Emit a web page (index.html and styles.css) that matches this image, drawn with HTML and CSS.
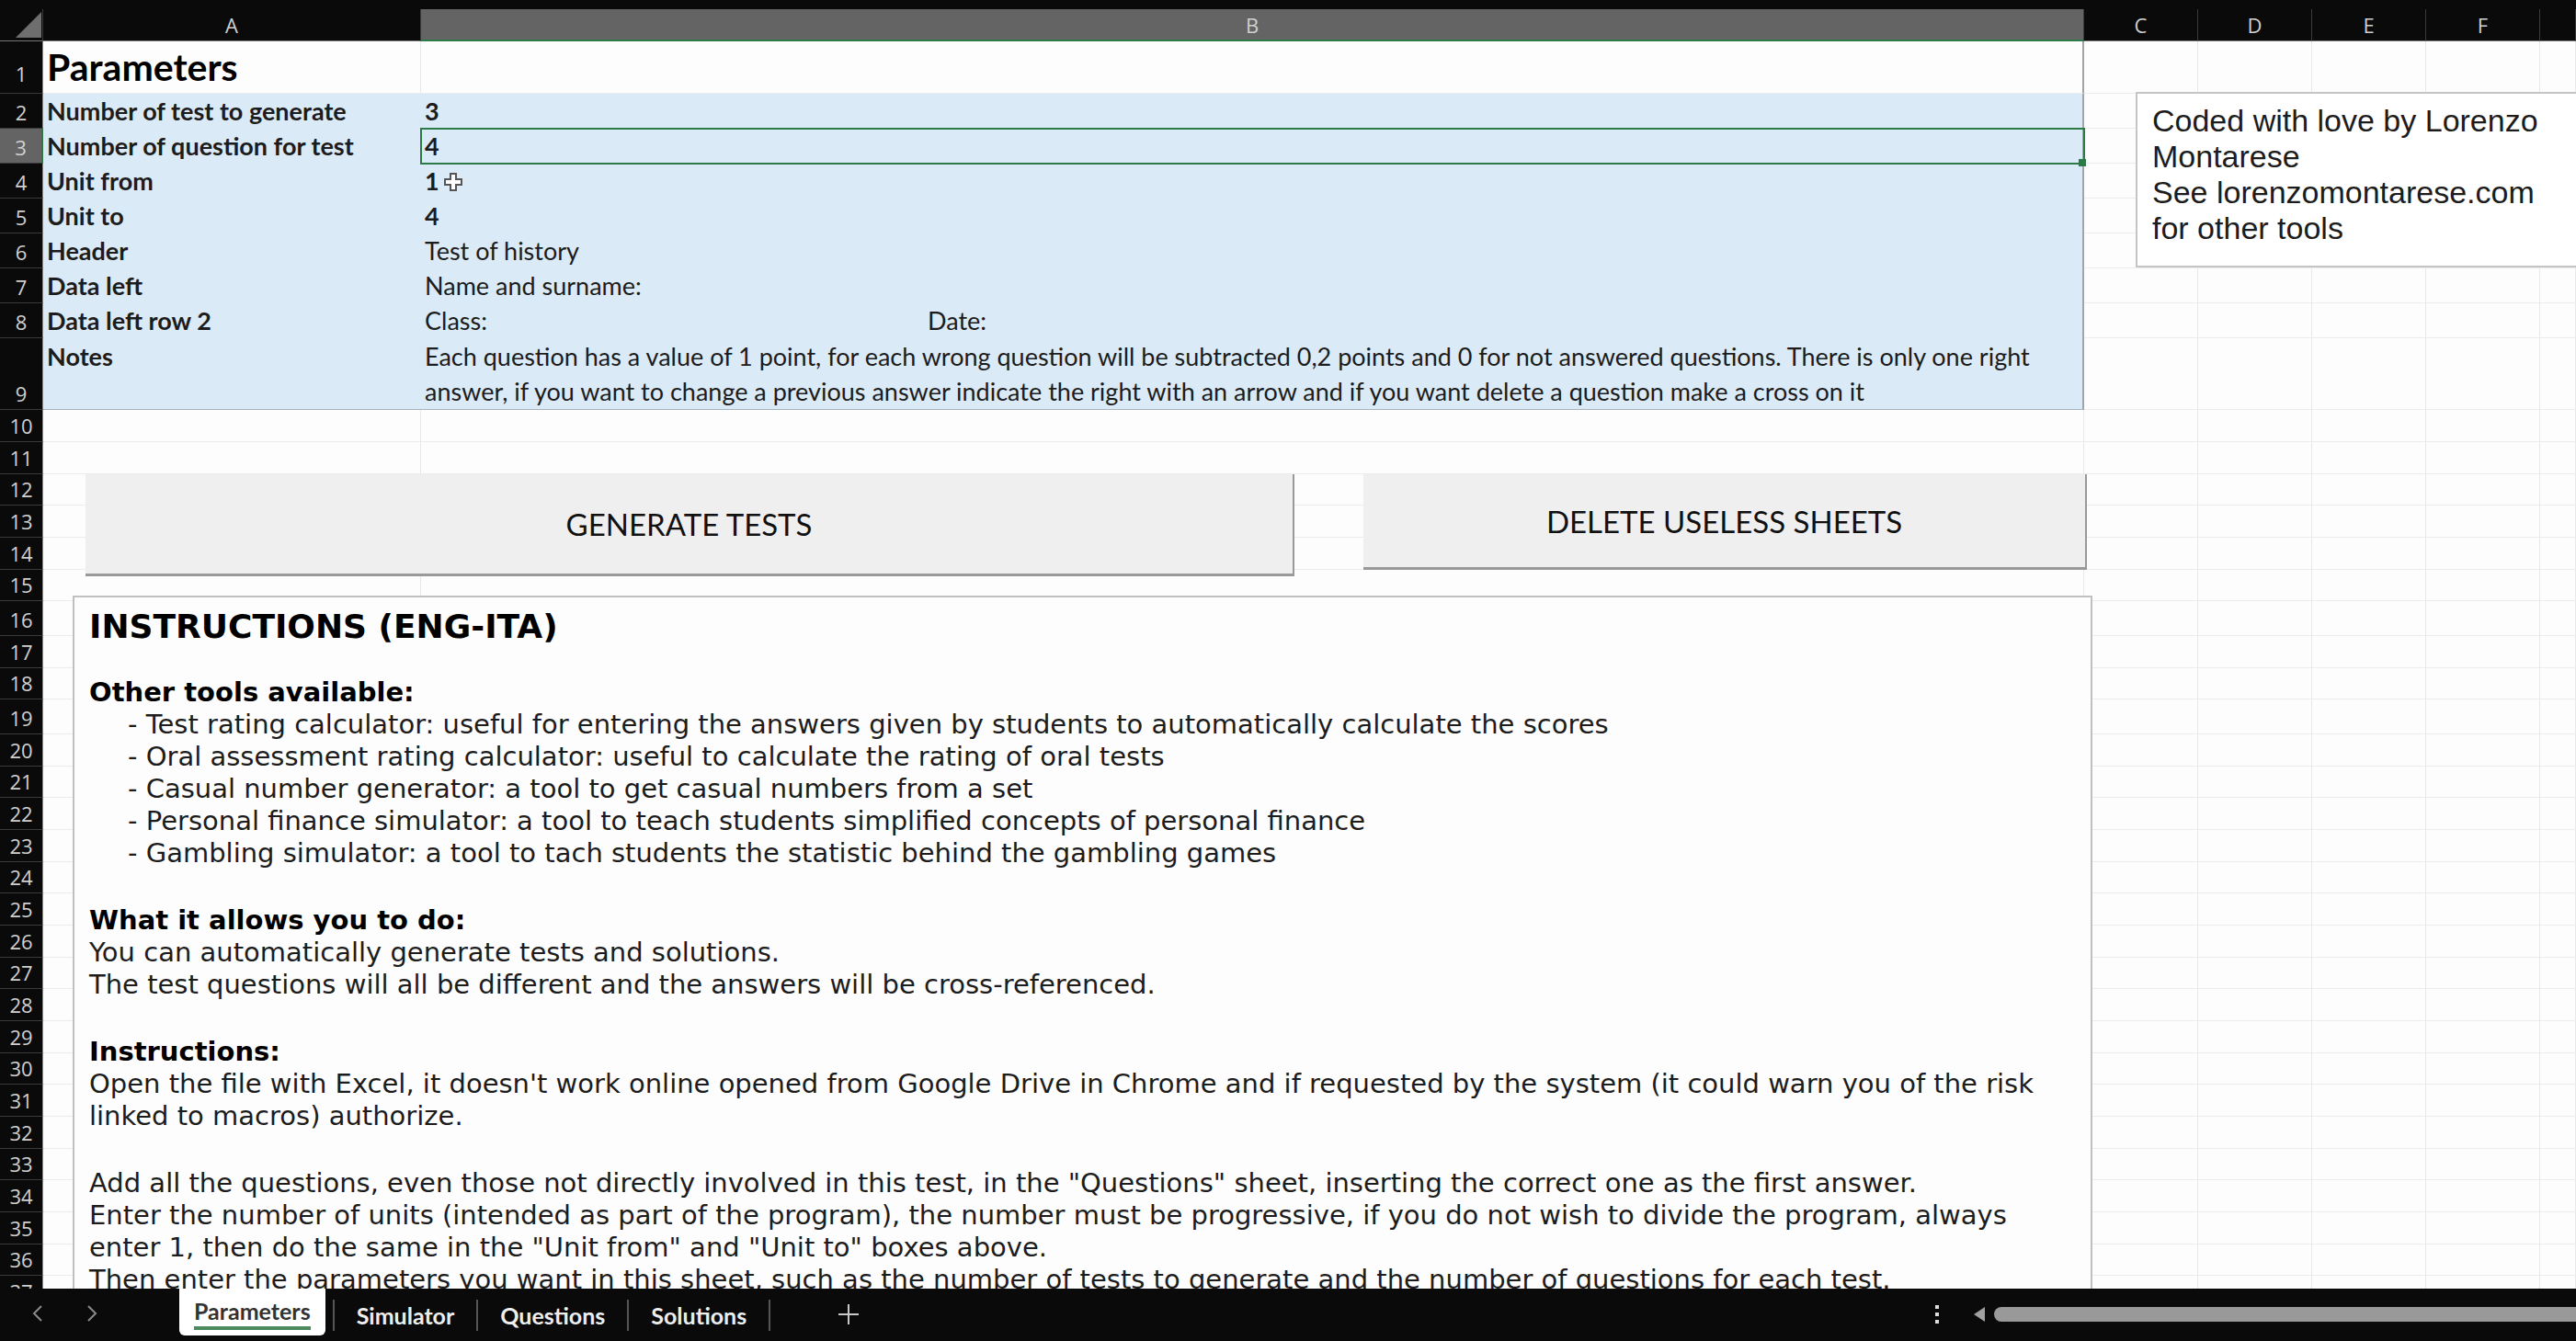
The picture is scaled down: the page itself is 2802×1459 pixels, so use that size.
FILE: index.html
```html
<!DOCTYPE html>
<html lang="en">
<head>
    <meta charset="UTF-8">
    <meta name="viewport" content="width=device-width, initial-scale=1.0">
    <link rel="stylesheet" href="styles.css">
    <title>Test generator</title>
</head>
<body>
    <main class="sheet">
        <table class="grid">
            <colgroup>
                <col class="col-num">
                <col class="col-a">
                <col class="col-b">
                <col class="col-std">
                <col class="col-std">
                <col class="col-std">
                <col class="col-std">
                <col class="col-last">
            </colgroup>
            <thead>
                <tr>
                    <th class="corner"><svg width="28" height="28" viewBox="0 0 28 28"><path d="M28 0V28H0Z" fill="#6e6e6e"/></svg></th>
                    <th>A</th>
                    <th class="selected">B</th>
                    <th>C</th>
                    <th>D</th>
                    <th>E</th>
                    <th>F</th>
                    <th></th>
                </tr>
            </thead>
            <tbody id="rows">
                <tr class="title-row"><th>1</th><td><h1>Parameters</h1></td><td class="edge"></td><td></td><td></td><td></td><td></td><td></td></tr>
                <tr class="param"><th>2</th><td>Number of test to generate</td><td class="strong">3</td><td></td><td></td><td></td><td></td><td></td></tr>
                <tr class="param"><th class="selected">3</th><td>Number of question for test</td><td class="strong active">4<span class="handle"></span></td><td></td><td></td><td></td><td></td><td></td></tr>
                <tr class="param"><th>4</th><td>Unit from</td><td class="strong">1<svg class="cursor" width="22" height="22" viewBox="0 0 22 22"><path d="M8 2H14V8H20V14H14V20H8V14H2V8H8Z" fill="#fff" stroke="#555" stroke-width="2"/></svg></td><td></td><td></td><td></td><td></td><td></td></tr>
                <tr class="param"><th>5</th><td>Unit to</td><td class="strong">4</td><td></td><td></td><td></td><td></td><td></td></tr>
                <tr class="param"><th>6</th><td>Header</td><td>Test of history</td><td></td><td></td><td></td><td></td><td></td></tr>
                <tr class="param"><th>7</th><td>Data left</td><td>Name and surname:</td><td></td><td></td><td></td><td></td><td></td></tr>
                <tr class="param"><th>8</th><td>Data left row 2</td><td><span class="class-label">Class:</span>Date:</td><td></td><td></td><td></td><td></td><td></td></tr>
                <tr class="param notes"><th>9</th><td>Notes</td><td>Each question has a value of 1 point, for each wrong question will be subtracted 0,2 points and 0 for not answered questions. There is only one right<br>answer, if you want to change a previous answer indicate the right with an arrow and if you want delete a question make a cross on it</td><td></td><td></td><td></td><td></td><td></td></tr>
            </tbody>
        </table>

        <!-- Objects floating over the cells -->
        <div class="actions">
            <button class="generate">GENERATE TESTS</button>
            <button class="delete">DELETE USELESS SHEETS</button>
        </div>

        <div class="credits">
            Coded with love by Lorenzo<br>
            Montarese<br>
            See lorenzomontarese.com<br>
            for other tools
        </div>

        <article class="instructions">
            <h2>INSTRUCTIONS (ENG-ITA)</h2>
            <section>
                <h3>Other tools available:</h3>
                <ul>
                    <li>- Test rating calculator: useful for entering the answers given by students to automatically calculate the scores</li>
                    <li>- Oral assessment rating calculator: useful to calculate the rating of oral tests</li>
                    <li>- Casual number generator: a tool to get casual numbers from a set</li>
                    <li>- Personal finance simulator: a tool to teach students simplified concepts of personal finance</li>
                    <li>- Gambling simulator: a tool to tach students the statistic behind the gambling games</li>
                </ul>
            </section>
            <section>
                <h3>What it allows you to do:</h3>
                <p>You can automatically generate tests and solutions.</p>
                <p>The test questions will all be different and the answers will be cross-referenced.</p>
            </section>
            <section>
                <h3>Instructions:</h3>
                <p>Open the file with Excel, it doesn't work online opened from Google Drive in Chrome and if requested by the system (it could warn you of the risk<br>linked to macros) authorize.</p>
            </section>
            <section>
                <p>Add all the questions, even those not directly involved in this test, in the "Questions" sheet, inserting the correct one as the first answer.</p>
                <p>Enter the number of units (intended as part of the program), the number must be progressive, if you do not wish to divide the program, always<br>enter 1, then do the same in the "Unit from" and "Unit to" boxes above.</p>
                <p>Then enter the parameters you want in this sheet, such as the number of tests to generate and the number of questions for each test.</p>
            </section>
        </article>
    </main>

    <footer class="bar">
        <nav class="arrows">
            <button aria-label="Previous sheet"><svg width="12" height="18" viewBox="0 0 12 18"><path d="M10 1L2 9L10 17" fill="none" stroke="#8a8a8a" stroke-width="2"/></svg></button>
            <button aria-label="Next sheet"><svg width="12" height="18" viewBox="0 0 12 18"><path d="M2 1L10 9L2 17" fill="none" stroke="#8a8a8a" stroke-width="2"/></svg></button>
        </nav>
        <nav class="tabs">
            <button class="tab current"><span>Parameters</span></button>
            <button class="tab first">Simulator</button>
            <button class="tab">Questions</button>
            <button class="tab">Solutions</button>
        </nav>
        <button class="add" aria-label="New sheet"><svg width="22" height="22" viewBox="0 0 22 22"><path d="M11 0V22M0 11H22" stroke="#c8c8c8" stroke-width="2"/></svg></button>
        <div class="scroll">
            <svg class="dots" width="4" height="20" viewBox="0 0 4 20"><path d="M0 0H4V4H0ZM0 8H4V12H0ZM0 16H4V20H0Z" fill="#ddd"/></svg>
            <svg class="left" width="12" height="16" viewBox="0 0 12 16"><path d="M12 0V16L0 8Z" fill="#a0a0a0"/></svg>
            <div class="thumb"></div>
        </div>
    </footer>

    <script>
        // Empty rows below the parameters
        const rows = document.getElementById('rows');
        for (let i = 10; i <= 37; i++) {
            const row = document.createElement('tr');
            row.innerHTML = '<th>' + i + '</th>' + '<td></td>'.repeat(7);
            if (i === 16 || i === 19) {
                row.className = 'tall';
            }
            rows.appendChild(row);
        }
    </script>
</body>
</html>
```

FILE: styles.css
```css
* {
    box-sizing: border-box;
}

body {
    display: flex;
    flex-direction: column;
    height: 100vh;
    margin: 0;
    overflow: hidden;
    background-color: #0a0a0a;
    font-family: Lato, "Open Sans", sans-serif;
    font-size: 27px;
    color: #1c1c1c;
}

h1, h2, h3, p, ul {
    margin: 0;
    padding: 0;
}

button {
    border: none;
    font-family: inherit;
    cursor: pointer;
}

.sheet {
    position: relative;
    flex: 1;
    min-height: 0;
    margin-top: 10px;
    overflow: hidden;
    background-color: #fdfdfd;
}

/* Cells */
.grid {
    width: 100%;
    table-layout: fixed;
    border-collapse: separate;
    border-spacing: 0;
}

.col-num {
    width: 47px;
}

.col-a {
    width: 411px;
}

.col-std {
    width: 124px;
}

.col-last {
    width: 39px;
}

th {
    padding: 0;
    background-color: #0a0a0a;
    color: #d0d0d0;
    font-family: "Open Sans", Lato, sans-serif;
    font-size: 22px;
    font-weight: normal;
    line-height: 28px;
}

thead th {
    height: 35px;
    border-right: 1px solid #3a3a3a;
    border-bottom: 1px solid #777;
}

thead th.selected {
    background-color: #646464;
    border-bottom: 2px solid #2c7a45;
}

.corner svg {
    display: block;
    margin-left: 17px;
}

tbody th {
    padding-bottom: 3px;
    border-right: 1px solid #888;
    border-bottom: 1px solid #3a3a3a;
    vertical-align: bottom;
}

.title-row th {
    padding-bottom: 7px;
}

tbody th.selected {
    background-color: #646464;
    border-right: 2px solid #2c7a45;
}

td {
    padding: 0 4px;
    border-right: 1px solid #e8e8e8;
    border-bottom: 1px solid #ececec;
    line-height: 38px;
    vertical-align: top;
    white-space: nowrap;
}

tbody tr {
    height: 35px;
}

tbody tr:nth-child(3n) {
    height: 34px;
}

tbody tr.tall {
    height: 38px;
}

tbody tr.title-row {
    height: 57px;
}

tbody tr.param {
    height: 38px;
}

tbody tr.notes {
    height: 78px;
}

h1 {
    font-size: 41px;
    line-height: 56px;
    color: #000;
}

.edge,
.param td:nth-child(3) {
    border-right: 2px solid #a4a4a8;
}

.param td:nth-child(2),
.param td:nth-child(3) {
    border-bottom: none;
    background-color: #dbeaf7;
}

.param td:nth-child(2) {
    border-right: none;
    font-weight: bold;
}

.notes td:nth-child(2),
.notes td:nth-child(3) {
    padding-top: 1px;
    border-bottom: 1px solid #a9b3bc;
}

.strong {
    font-weight: bold;
}

.param .active {
    position: relative;
    outline: 2px solid #2c7a45;
    outline-offset: -1px;
}

.handle {
    position: absolute;
    right: -4px;
    bottom: -3px;
    width: 8px;
    height: 8px;
    background-color: #2c7a45;
}

.cursor {
    margin-left: 4px;
    vertical-align: -2px;
}

.class-label {
    display: inline-block;
    width: 547px;
}

/* Floating objects */
.actions {
    position: absolute;
    top: 506px;
    left: 93px;
    right: 532px;
    display: flex;
    align-items: flex-start;
    gap: 75px;
}

.actions button {
    padding: 0;
    background-color: #efefef;
    border-right: 2px solid #999;
    border-bottom: 3px solid #999;
    font-size: 33px;
    color: #111;
}

.actions .generate {
    flex: 1;
    height: 111px;
}

.actions .delete {
    width: 787px;
    height: 104px;
}

.credits {
    position: absolute;
    top: 90px;
    right: -20px;
    width: 499px;
    height: 191px;
    padding: 10px 16px;
    border: 2px solid #c4c4c4;
    background-color: #fff;
    font-family: "Liberation Sans", Arial, sans-serif;
    font-size: 34px;
    line-height: 39px;
}

.instructions {
    position: absolute;
    top: 638px;
    left: 79px;
    right: 526px;
    height: 900px;
    padding: 14px 16px;
    border: 2px solid #c0c0c0;
    background-color: #fdfdfd;
    font-family: "DejaVu Sans", Verdana, sans-serif;
    font-size: 29px;
    line-height: 35px;
    white-space: nowrap;
}

.instructions h2 {
    margin-bottom: 37px;
    font-size: 36px;
    line-height: 35px;
    color: #000;
}

.instructions h3 {
    font-size: 29px;
    color: #000;
}

.instructions section {
    margin-bottom: 38px;
}

.instructions ul {
    padding-left: 42px;
    list-style: none;
}

/* Sheet tabs */
.bar {
    display: flex;
    align-items: flex-start;
    height: 57px;
}

.bar button {
    padding: 0;
    background: none;
}

.arrows {
    display: flex;
    gap: 47px;
    width: 195px;
    padding: 18px 0 0 35px;
}

.arrows svg {
    display: block;
}

.tabs {
    display: flex;
    align-items: flex-start;
}

.bar .tab {
    height: 34px;
    margin-top: 12px;
    padding: 0 24px;
    border-right: 2px solid #555;
    color: #eee;
    font-size: 25px;
    font-weight: bold;
    line-height: 34px;
}

.bar .first {
    border-left: 2px solid #555;
}

.bar .current {
    height: 51px;
    margin: 0 8px 0 0;
    padding: 0 16px;
    border-right: none;
    border-radius: 0 0 6px 6px;
    background-color: #fff;
    color: #333;
}

.current span {
    display: block;
    border-bottom: 4px solid #4a8a5c;
}

.bar .add {
    margin: 17px 0 0 74px;
}

.add svg {
    display: block;
}

.scroll {
    display: flex;
    align-items: center;
    width: 697px;
    height: 20px;
    margin: 18px 0 0 auto;
}

.scroll .left {
    margin: 0 10px 0 38px;
}

.thumb {
    flex: 1;
    height: 16px;
    border-radius: 8px 0 0 8px;
    background-color: #999;
}
```
